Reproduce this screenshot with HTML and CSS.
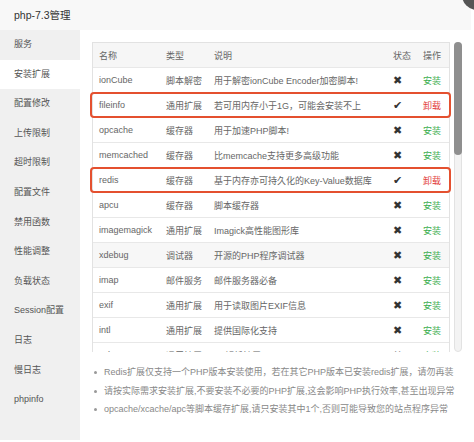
FILE: index.html
```html
<!DOCTYPE html>
<html lang="zh-CN">
<head>
<meta charset="utf-8">
<title>php-7.3管理</title>
<link rel="stylesheet" href="styles.css">
</head>
<body>
<div class="layer">
  <div class="title">php-7.3管理</div>
  <span class="close"></span>
  <div class="content">
    <ul class="menu">
      <li>服务</li>
      <li class="active">安装扩展</li>
      <li>配置修改</li>
      <li>上传限制</li>
      <li>超时限制</li>
      <li>配置文件</li>
      <li>禁用函数</li>
      <li>性能调整</li>
      <li>负载状态</li>
      <li>Session配置</li>
      <li>日志</li>
      <li>慢日志</li>
      <li>phpinfo</li>
    </ul>
    <div class="main">
      <div class="table-area">
        <div class="table">
          <div class="row head"><span>名称</span><span>类型</span><span>说明</span><span>状态</span><span class="op">操作</span></div>
          <div class="row"><span>ionCube</span><span>脚本解密</span><span>用于解密ionCube Encoder加密脚本!</span><span class="st">✖</span><span class="op install">安装</span></div>
          <div class="row hl"><span>fileinfo</span><span>通用扩展</span><span>若可用内存小于1G，可能会安装不上</span><span class="st">✔</span><span class="op remove">卸载</span></div>
          <div class="row"><span>opcache</span><span>缓存器</span><span>用于加速PHP脚本!</span><span class="st">✖</span><span class="op install">安装</span></div>
          <div class="row"><span>memcached</span><span>缓存器</span><span>比memcache支持更多高级功能</span><span class="st">✖</span><span class="op install">安装</span></div>
          <div class="row hl"><span>redis</span><span>缓存器</span><span>基于内存亦可持久化的Key-Value数据库</span><span class="st">✔</span><span class="op remove">卸载</span></div>
          <div class="row"><span>apcu</span><span>缓存器</span><span>脚本缓存器</span><span class="st">✖</span><span class="op install">安装</span></div>
          <div class="row"><span>imagemagick</span><span>通用扩展</span><span>Imagick高性能图形库</span><span class="st">✖</span><span class="op install">安装</span></div>
          <div class="row hover"><span>xdebug</span><span>调试器</span><span>开源的PHP程序调试器</span><span class="st">✖</span><span class="op install">安装</span></div>
          <div class="row"><span>imap</span><span>邮件服务</span><span>邮件服务器必备</span><span class="st">✖</span><span class="op install">安装</span></div>
          <div class="row"><span>exif</span><span>通用扩展</span><span>用于读取图片EXIF信息</span><span class="st">✖</span><span class="op install">安装</span></div>
          <div class="row"><span>intl</span><span>通用扩展</span><span>提供国际化支持</span><span class="st">✖</span><span class="op install">安装</span></div>
          <div class="row"><span>xsl</span><span>通用扩展</span><span>xsl解析扩展</span><span class="st">✖</span><span class="op install">安装</span></div>
        </div>
        <div class="scrollbar"><div class="thumb"></div></div>
      </div>
      <ul class="notes">
        <li>Redis扩展仅支持一个PHP版本安装使用，若在其它PHP版本已安装redis扩展，请勿再装</li>
        <li>请按实际需求安装扩展,不要安装不必要的PHP扩展,这会影响PHP执行效率,甚至出现异常</li>
        <li>opcache/xcache/apc等脚本缓存扩展,请只安装其中1个,否则可能导致您的站点程序异常</li>
      </ul>
    </div>
  </div>
</div>
</body>
</html>
```

FILE: styles.css
```css
html, body {
  margin: 0;
  padding: 0;
  overflow: hidden;
  background: #fff;
}

body {
  font-family: "Liberation Sans", "Noto Sans CJK SC", sans-serif;
  font-size: 9px;
  color: #666;
}

.layer {
  width: 471px;
  position: relative;
}

.title {
  height: 30px;
  line-height: 30px;
  background: #f8f8f8;
  padding-left: 14px;
  font-size: 10.5px;
  color: #333;
}

.close {
  position: absolute;
  left: 462px;
  top: -20px;
  width: 30px;
  height: 30px;
  border-radius: 50%;
  background: #555;
}

.content {
  display: flex;
}

.menu {
  width: 80px;
  height: 410px;
  margin: 0;
  padding: 0;
  list-style: none;
  background: #f0f0f0;
  flex: none;
}

.menu li {
  height: 29.6px;
  line-height: 29.6px;
  padding-left: 14px;
  color: #555;
}

.menu li.active {
  background: #fff;
}

.main {
  flex: 1;
  padding: 12px 0 0 12px;
}

.table-area {
  display: flex;
  gap: 4px;
  height: 310px;
}

.table {
  width: 358px;
  height: 310px;
  box-sizing: border-box;
  border: 1px solid #e2e2e2;
  border-bottom: none;
  overflow-x: visible;
  overflow-y: clip;
}

.row {
  display: grid;
  grid-template-columns: 67px 48px 179px 29px 1fr;
  align-items: center;
  height: 25px;
  box-sizing: border-box;
  border-bottom: 1px solid #e8e8e8;
  position: relative;
}

.row span {
  padding-left: 6px;
  white-space: nowrap;
}

.row span.op {
  padding-left: 7px;
}

.head {
  background: #f6f6f6;
}

.hover {
  background: #f7f7f7;
}

.row span.st {
  font-family: "DejaVu Sans", sans-serif;
  font-size: 11px;
  line-height: 1;
  padding-left: 6px;
  color: #333;
}

.install {
  color: #3aae4f;
}

.remove {
  color: #e2403d;
}

.hl::after {
  content: "";
  position: absolute;
  left: -3px;
  right: -2px;
  top: -1px;
  bottom: -1px;
  border: 2px solid #e4502f;
  border-radius: 4px;
  pointer-events: none;
}

.scrollbar {
  width: 8px;
  height: 310px;
  box-sizing: border-box;
  background: #f3f3f3;
  border: 1px solid #e2e2e2;
  border-radius: 4px;
  flex: none;
}

.thumb {
  height: 113px;
  margin: -1px;
  background: #8f8f8f;
  border-radius: 4px;
}

.notes {
  margin: 11px 0 0 0;
  padding: 0;
  list-style: none;
  color: #888;
}

.notes li {
  position: relative;
  line-height: 18.5px;
  padding-left: 12px;
  white-space: nowrap;
}

.notes li::before {
  content: "";
  position: absolute;
  left: 2px;
  top: 8px;
  width: 3px;
  height: 3px;
  border-radius: 50%;
  background: #999;
}
```
